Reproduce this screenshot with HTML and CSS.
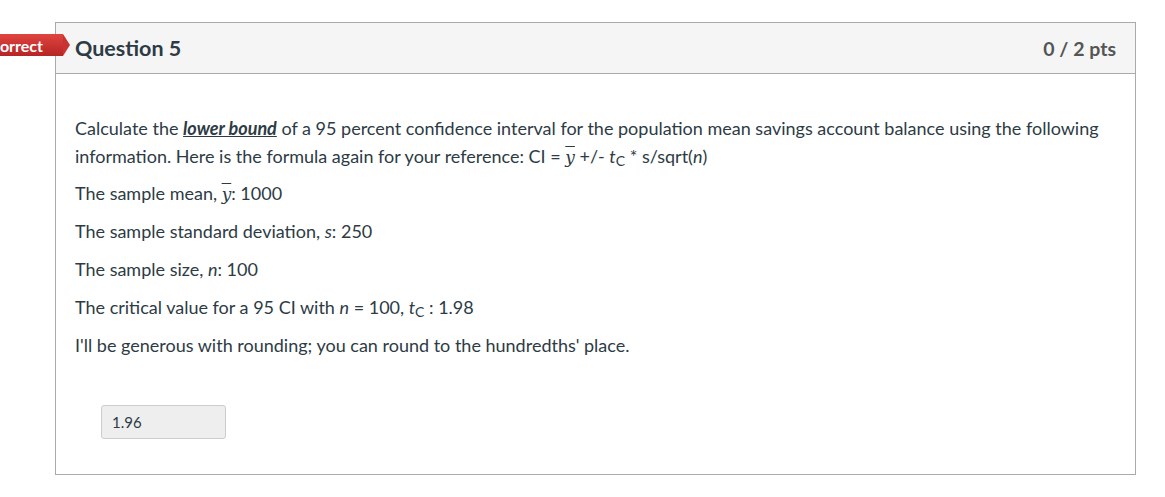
FILE: index.html
```html
<!DOCTYPE html>
<html>
<head>
<meta charset="utf-8">
<link rel="stylesheet" href="styles.css">
</head>
<body>
<div class="page">
  <div class="question">
    <div class="badge"><span class="badge-text">Incorrect</span></div>
    <div class="header">
      <span class="title">Question 5</span>
      <span class="pts">0 / 2 pts</span>
    </div>
    <div class="body">
      <p class="first">Calculate the <a class="emph">lower bound</a> of a 95 percent confidence interval for the population mean savings account balance using the following information. Here is the formula again for your reference: CI = <span class="ybar">y</span> +/- <i class="t">t</i><sub class="c">C</sub> * s/sqrt(<i>n</i>)</p>
      <p class="second">The sample mean, <span class="ybar">y</span>: 1000</p>
      <p>The sample standard deviation, <i>s</i>: 250</p>
      <p>The sample size, <i>n</i>: 100</p>
      <p>The critical value for a 95 CI with <i>n</i> = 100, <i class="t">t</i><sub class="c">C</sub> : 1.98</p>
      <p>I'll be generous with rounding; you can round to the hundredths' place.</p>
      <div class="answer"><span class="answer-box">1.96</span></div>
    </div>
  </div>
</div>
</body>
</html>
```
FILE: styles.css
```css
html, body {
  margin: 0;
  padding: 0;
  background: #fff;
}
body {
  font-family: Lato, "Liberation Sans", sans-serif;
  color: #2d3b45;
}
.page {
  padding: 22px 29px 0 55px;
}
.question {
  position: relative;
  border: 1px solid #aaaaaa;
  width: 1079px;
}
.badge {
  position: absolute;
  left: -90px;
  top: 11px;
  height: 22px;
  width: 97px;
  background: linear-gradient(#e0443f, #b52525);
  display: flex;
  align-items: center;
  justify-content: flex-end;
  padding-right: 20px;
  box-sizing: border-box;
}
.badge::after {
  content: "";
  position: absolute;
  right: -7px;
  top: 0;
  border-top: 11px solid transparent;
  border-bottom: 11px solid transparent;
  border-left: 7px solid #c93333;
}
.badge-text {
  color: #fff;
  font-weight: 700;
  font-size: 16px;
  white-space: nowrap;
}
.header {
  background: #f5f5f5;
  border-bottom: 1px solid #aaaaaa;
  height: 50px;
  display: flex;
  align-items: center;
  justify-content: space-between;
  padding: 0 19px 0 19px;
}
.title {
  font-size: 21.5px;
  font-weight: 700;
  color: #2d3b45;
}
.pts {
  font-size: 19.5px;
  font-weight: 700;
  color: #555;
}
.body {
  padding: 40px 20px 35px 19px;
  font-size: 18px;
}
.body p {
  margin: 0 0 12px;
  line-height: 26px;
}
.body p.first {
  line-height: 28px;
  margin-bottom: 9px;
}
.body p.second {
  margin-bottom: 11px;
}
.emph {
  font-weight: 700;
  font-style: italic;
  text-decoration: underline;
  color: #2d3b45;
}
.ybar {
  font-family: "DejaVu Serif", "Liberation Serif", serif;
  font-style: italic;
  text-decoration: overline;
  font-size: 17px;
}
.t {
  font-style: italic;
}
.c {
  font-size: 14px;
  vertical-align: -3px;
  line-height: 0;
}
.answer {
  display: flex;
  padding: 35px 0 0 26px;
}
.answer-box {
  width: 113px;
  height: 32px;
  background: #eeeeee;
  border: 1px solid #cccccc;
  border-radius: 3px;
  font-size: 15px;
  display: flex;
  align-items: center;
  padding-left: 10px;
  color: #2d3b45;
}
```
